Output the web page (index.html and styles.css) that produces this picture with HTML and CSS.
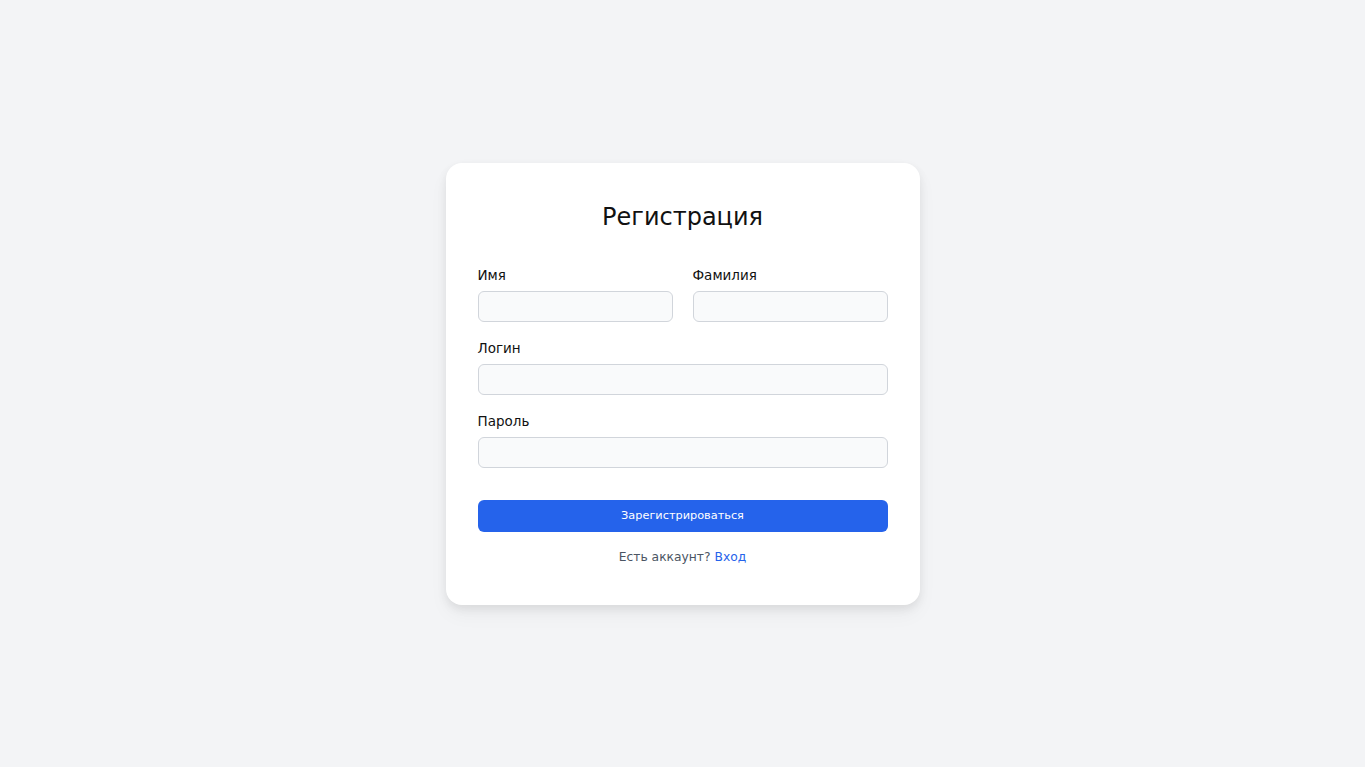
FILE: index.html
```html
<!DOCTYPE html>
<html lang="ru">
<head>
<meta charset="utf-8">
<title>Регистрация</title>
<link rel="stylesheet" href="styles.css">
</head>
<body>
<main class="page">
  <form class="card">
    <h1 class="title">Регистрация</h1>
    <div class="row">
      <div class="field">
        <label class="label" for="first">Имя</label>
        <input class="input" id="first" type="text">
      </div>
      <div class="field">
        <label class="label" for="last">Фамилия</label>
        <input class="input" id="last" type="text">
      </div>
    </div>
    <div class="field">
      <label class="label" for="login">Логин</label>
      <input class="input" id="login" type="text">
    </div>
    <div class="field">
      <label class="label" for="pass">Пароль</label>
      <input class="input" id="pass" type="password">
    </div>
    <button class="btn" type="button">Зарегистрироваться</button>
    <p class="foot">Есть аккаунт? <a class="link" href="#">Вход</a></p>
  </form>
</main>
</body>
</html>
```
FILE: styles.css
```css
* { box-sizing: border-box; }
html, body { margin: 0; height: 100%; }
body {
  background: #f3f4f6;
  font-family: "DejaVu Sans", "Noto Sans", sans-serif;
  color: #111827;
}
.page {
  min-height: 100vh;
  display: flex;
  align-items: center;
  justify-content: center;
}
.card {
  width: 474px;
  background: #ffffff;
  border-radius: 16px;
  padding: 40px 32px 39px;
  box-shadow: 0 4px 10px rgba(0,0,0,0.08), 0 10px 20px rgba(0,0,0,0.04);
  display: flex;
  flex-direction: column;
}
.title {
  margin: 0 0 35px;
  font-size: 24px;
  line-height: 28px;
  font-weight: 400;
  text-align: center;
  color: #111;
}
.row {
  display: grid;
  grid-template-columns: minmax(0, 1fr) minmax(0, 1fr);
  column-gap: 20px;
}
.field {
  display: flex;
  flex-direction: column;
  min-width: 0;
  margin-bottom: 17px;
}
.label {
  font-size: 13.5px;
  line-height: 18px;
  font-weight: 500;
  margin-bottom: 7px;
  color: #111;
}
.input {
  width: 100%;
  height: 31px;
  border: 1px solid #d1d5db;
  border-radius: 6px;
  background: #f9fafb;
  font: inherit;
  padding: 0 10px;
}
.btn {
  margin-top: 15px;
  height: 32px;
  border: 0;
  border-radius: 6px;
  background: #2563eb;
  color: #fff;
  font-family: inherit;
  font-size: 11.3px;
  font-weight: 500;
}
.foot {
  margin: 16px 0 0;
  font-size: 12.3px;
  line-height: 18px;
  text-align: center;
  color: #4b5563;
}
.link { color: #2563eb; text-decoration: none; }
```
